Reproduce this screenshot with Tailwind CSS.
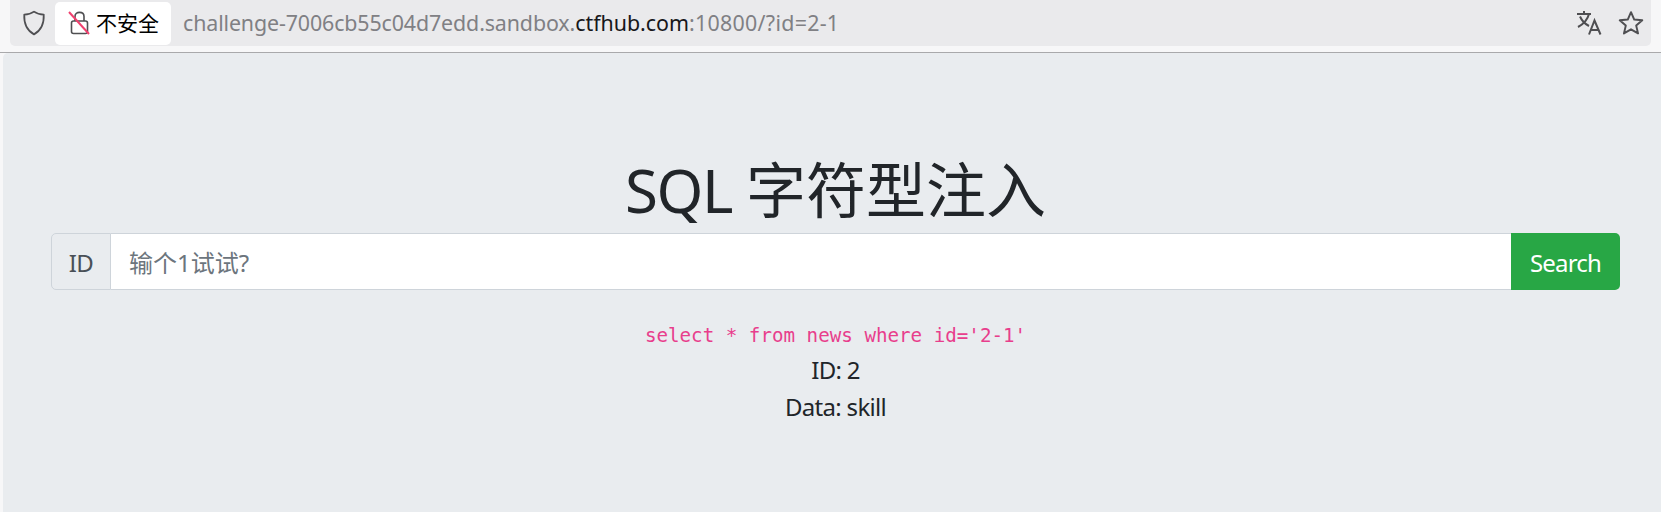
<!DOCTYPE html>
<html lang="zh-CN">
<head>
  <meta charset="UTF-8">
  <meta name="viewport" content="width=device-width, initial-scale=1.0">
  <title>SQL 字符型注入</title>
  <script src="https://cdn.jsdelivr.net/npm/@tailwindcss/browser@4"></script>
</head>
<body class="h-[512px] overflow-hidden bg-[#f7f7f8] font-['Noto_Sans','Noto_Sans_CJK_SC',sans-serif] text-[#212529]">

  <!-- Browser toolbar -->
  <header class="h-[53px] px-[10px] border-b border-[#a9a9ab]">
    <div class="h-[46px] rounded-b-[5px] bg-[#eaeaec] flex items-center pl-[11px] pr-[10px]">
      <svg class="w-[26px] h-[26px] shrink-0" viewBox="0 0 24 24" fill="none" stroke="#4f4f52" stroke-width="1.6" stroke-linejoin="round">
        <path d="M12 1.5 C14.6 3.4 17.6 4.2 21 4.2 C21.4 12.8 18.8 18.8 12 22.5 C5.2 18.8 2.6 12.8 3 4.2 C6.4 4.2 9.4 3.4 12 1.5 Z"/>
      </svg>
      <div class="ml-[8px] h-[43px] w-[116px] shrink-0 rounded-[5px] bg-white flex items-center pl-[13px]">
        <svg class="w-[22px] h-[26px] shrink-0" viewBox="0 0 22 26" fill="none" stroke-width="1.6">
          <path d="M7 11 V6.5 C7 1 16 1 16 6.5 V11" stroke="#4f4f52"/>
          <rect x="3.5" y="11" width="16" height="12.5" rx="2" stroke="#4f4f52"/>
          <path d="M1 2 L21 24" stroke="#f0406e" stroke-width="2"/>
        </svg>
        <span class="ml-[6px] text-[21px] leading-none text-black">不安全</span>
      </div>
      <div class="ml-[12px] text-[21.4px] text-[#808084] whitespace-nowrap"><span class="tracking-[-0.12px]">challenge-7006cb55c04d7edd.sandbox.</span><span class="text-[#17171a]">ctfhub.com</span><span class="tracking-[0.28px]">:10800/?id=2-1</span></div>
      <div class="ml-auto flex items-center gap-[16px]">
        <svg class="w-[26px] h-[26px]" viewBox="0 0 26 26" fill="none" stroke="#4f4f52" stroke-width="2">
          <path d="M1 4 H15 M8 1 V4 M13 4 C11.5 10 7.5 14 2 17 M4 6.5 C6 11 9 14 13 16"/>
          <path d="M13 24.5 L18.5 10.5 L24.5 24.5 M15 20 H22.5"/>
        </svg>
        <svg class="w-[26px] h-[26px] mr-[-3px]" viewBox="0 0 24 24" fill="none" stroke="#4f4f52" stroke-width="1.8" stroke-linejoin="round">
          <path d="M12 2 L15 8.8 L22.4 9.5 L16.8 14.4 L18.5 21.6 L12 17.8 L5.5 21.6 L7.2 14.4 L1.6 9.5 L9 8.8 Z"/>
        </svg>
      </div>
    </div>
  </header>

  <!-- Page -->
  <main class="ml-[3px] h-[459px] rounded-tl-[5px] bg-[#e9ecef] pl-[48px] pr-[41px] pt-[94px] overflow-hidden">
    <h1 class="text-center text-[60px] leading-[86px] font-normal"><span class="tracking-[-1.5px]">SQL </span>字符型注入</h1>

    <form class="flex h-[57px] text-[24px]">
      <label class="w-[60px] shrink-0 flex items-center justify-center pt-[2px] rounded-l-[5px] border border-[#ced4da] bg-[#e9ecef] text-[#495057] tracking-[-0.5px]">ID</label>
      <input type="text" placeholder="输个1试试?" class="flex-1 min-w-0 bg-white border-y border-[#ced4da] px-[18px] pt-[2px] outline-none placeholder:text-[#6c757d]">
      <button type="button" class="w-[109px] shrink-0 pt-[2px] rounded-r-[5px] bg-[#28a745] text-white tracking-[-0.8px]">Search</button>
    </form>

    <div class="mt-[31px] text-center text-[24px] tracking-[-0.7px]">
      <code class="block font-['DejaVu_Sans_Mono',monospace] text-[19.2px] leading-[30px] tracking-normal text-[#e83e8c]">select * from news where id='2-1'</code>
      <p class="leading-[37px]">ID: 2</p>
      <p class="leading-[37px]">Data: skill</p>
    </div>
  </main>
</body>
</html>
